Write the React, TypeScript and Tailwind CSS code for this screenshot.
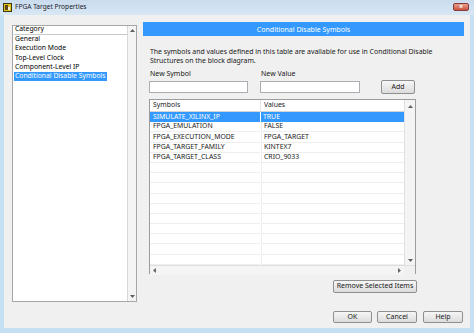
const font = { fontFamily: '"Noto Sans", "Open Sans", sans-serif' };

function Arrow({ dir }: { dir: 'up' | 'down' | 'left' | 'right' }) {
  const pts = {
    up: '0,4 3.5,0 7,4',
    down: '0,0 3.5,4 7,0',
    left: '4,0 0,3.5 4,7',
    right: '0,0 4,3.5 0,7',
  }[dir];
  const vertical = dir === 'up' || dir === 'down';
  return (
    <svg width={vertical ? 5 : 3} height={vertical ? 3 : 5} viewBox={vertical ? '0 0 7 4' : '0 0 4 7'}>
      <polygon points={pts} fill="#606060" />
    </svg>
  );
}

function Button({ label, className }: { label: string; className: string }) {
  return (
    <div
      className={`flex items-center justify-center rounded-[2px] border border-[#8e8f8f] bg-gradient-to-b from-[#f6f6f6] to-[#dcdcdc] text-[7px] text-[#1a1a1a] ${className}`}
    >
      {label}
    </div>
  );
}

const categories = ['General', 'Execution Mode', 'Top-Level Clock', 'Component-Level IP', 'Conditional Disable Symbols'];

const rows: [string, string][] = [
  ['SIMULATE_XILINX_IP', 'TRUE'],
  ['FPGA_EMULATION', 'FALSE'],
  ['FPGA_EXECUTION_MODE', 'FPGA_TARGET'],
  ['FPGA_TARGET_FAMILY', 'KINTEX7'],
  ['FPGA_TARGET_CLASS', 'CRIO_9033'],
];

export default function App() {
  return (
    <div className="flex h-[333px] w-[474px] flex-col overflow-hidden bg-[#c6e0f3]" style={font}>
      {/* title bar */}
      <div className="flex h-[15px] shrink-0 items-center bg-gradient-to-b from-[#c9dcee] to-[#d8e7f4] pl-[3px] pr-[5px]">
        <svg width="9" height="9" viewBox="0 0 9 9">
          <rect x="0.5" y="0.5" width="8" height="8" fill="#e8c020" stroke="#3a3a10" />
          <rect x="2" y="2" width="3" height="5" fill="#5a4a10" />
          <rect x="5" y="4" width="2" height="3" fill="#f4f0d0" />
        </svg>
        <span className="ml-[3px] text-[6.6px] leading-none text-[#1a1a2a]">FPGA Target Properties</span>
        <div className="ml-auto mt-[-2px] flex h-[8px] w-[16px] items-center justify-center rounded-[2px] border border-[#8a3a3a] bg-gradient-to-b from-[#e8a090] to-[#c8503e]">
          <span className="text-[7px] font-bold leading-none text-white">×</span>
        </div>
      </div>

      {/* client area */}
      <div className="ml-[4px] mr-[4px] flex h-[313px] shrink-0 bg-[#f0f0f0]">
        {/* category list */}
        <div className="ml-[8px] mt-[10px] flex h-[277px] w-[125px] border border-[#a6a6a6] bg-white">
          <div className="flex flex-1 flex-col pl-[1px] text-[6.8px] text-black">
            <div className="flex h-[8.5px] items-center border-b border-[#c8c8c8] pl-[1px] leading-none">Category</div>
            {categories.map((c, i) => (
              <div key={c} className="flex h-[9.4px] items-center leading-none">
                <span className={i === 4 ? 'bg-[#3399ff] px-[1px] py-[1px] text-white' : 'px-[1px]'}>{c}</span>
              </div>
            ))}
          </div>
          <div className="flex w-[9px] flex-col items-center justify-between border-l border-[#d8d8d8] bg-[#f4f4f4] pb-[3px] pt-[3px]">
            <Arrow dir="up" />
            <Arrow dir="down" />
          </div>
        </div>

        {/* right panel */}
        <div className="ml-[6px] mt-[7px] flex w-[321px] flex-col">
          <div className="flex h-[14px] items-center justify-center bg-[#3399ff] text-[7px] leading-none text-white">
            Conditional Disable Symbols
          </div>
          <div className="flex flex-col pl-[6px]">
            <p className="mt-[12px] pl-[1px] text-[6.9px] leading-[8.5px] text-[#1a1a1a]">
              The symbols and values defined in this table are available for use in Conditional Disable
              <br />
              Structures on the block diagram.
            </p>
            <div className="mt-[5px] flex items-end">
              <div className="flex flex-col">
                <span className="pl-[1px] text-[7px] leading-none text-[#1a1a1a]">New Symbol</span>
                <div className="mt-[4px] h-[12px] w-[99px] border border-[#abadb3] bg-white" />
              </div>
              <div className="ml-[12px] flex flex-col">
                <span className="pl-[1px] text-[7px] leading-none text-[#1a1a1a]">New Value</span>
                <div className="mt-[4px] h-[12px] w-[100px] border border-[#abadb3] bg-white" />
              </div>
              <Button label="Add" className="mb-[-1px] ml-[21px] h-[14px] w-[34px]" />
            </div>

            {/* table */}
            <div className="mt-[6px] flex h-[175px] w-[267px] flex-col border border-[#9c9c9c] bg-white text-[6.9px] leading-none">
              <div className="flex flex-1">
                <div className="flex flex-1 flex-col overflow-hidden">
                  <div className="flex h-[12px] shrink-0 border-b border-[#d5d5d5] text-[#1a1a1a]">
                    <div className="flex w-[110px] items-center pl-[3px]">Symbols</div>
                    <div className="flex flex-1 items-center border-l border-[#e4e4e4] pl-[3px]">Values</div>
                  </div>
                  {Array.from({ length: 15 }).map((_, i) => {
                    const r = rows[i];
                    const sel = i === 0;
                    return (
                      <div key={i} className="flex h-[10.2px] shrink-0">
                        <div
                          className={`flex w-[110px] items-center pl-[3px] ${
                            sel ? 'bg-[#3399ff] text-white' : 'border-b border-[#eeeeee] text-[#1a1a1a]'
                          }`}
                        >
                          {r ? r[0] : ''}
                        </div>
                        <div
                          className={`ml-[1px] flex flex-1 items-center pl-[2px] ${
                            sel ? 'bg-[#3399ff] text-white' : 'border-b border-l border-[#eeeeee] text-[#1a1a1a]'
                          }`}
                        >
                          {r ? r[1] : ''}
                        </div>
                      </div>
                    );
                  })}
                </div>
                <div className="flex w-[11px] flex-col items-center justify-between border-l border-[#e0e0e0] bg-[#f4f4f4] pb-[3px] pt-[5px]">
                  <Arrow dir="up" />
                  <Arrow dir="down" />
                </div>
              </div>
              <div className="flex h-[10px] shrink-0 border-t border-[#dedede] bg-[#f4f4f4]">
                <div className="flex flex-1 items-center justify-between px-[3px]">
                  <Arrow dir="left" />
                  <Arrow dir="right" />
                </div>
                <div className="w-[11px] bg-[#f0f0f0]" />
              </div>
            </div>

            <div className="flex w-[268px] justify-end">
              <Button label="Remove Selected Items" className="mt-[6px] h-[13px] w-[84px]" />
            </div>
          </div>

          <div className="mt-[18px] flex justify-end gap-[5px] pr-[1px]">
            <Button label="OK" className="h-[12px] w-[39px]" />
            <Button label="Cancel" className="h-[12px] w-[40px]" />
            <Button label="Help" className="ml-[1px] h-[12px] w-[40px]" />
          </div>
        </div>
      </div>
    </div>
  );
}
